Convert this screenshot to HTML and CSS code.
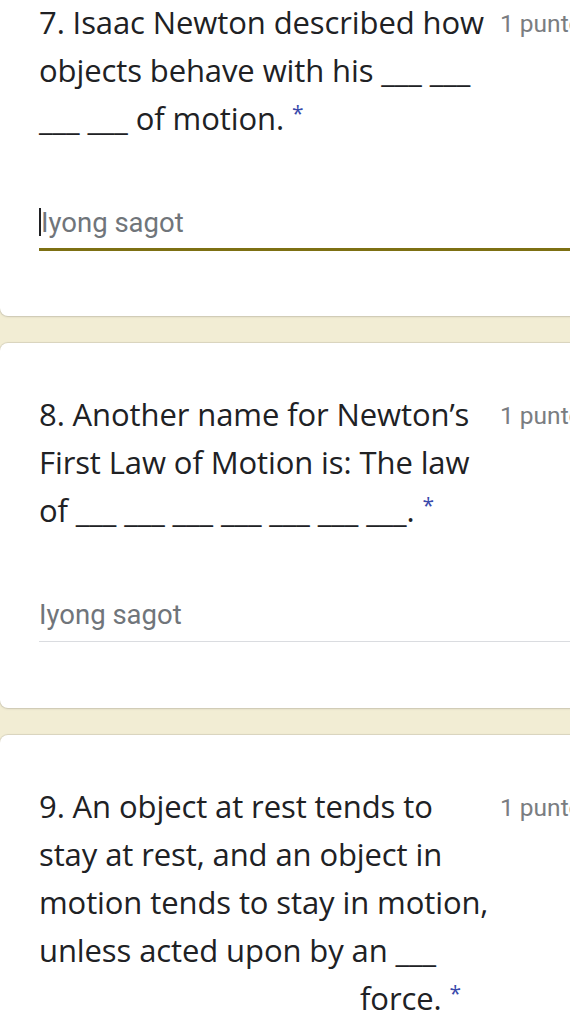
FILE: index.html
```html
<!DOCTYPE html>
<html lang="en">
<head>
    <meta charset="UTF-8">
    <meta name="viewport" content="width=device-width, initial-scale=1.0">
    <title>Quiz - Newton's Laws</title>
    <link rel="stylesheet" href="styles.css">
</head>
<body>
    <div class="form-page">
        <div class="question-card">
            <div class="question-head">
                <div class="question-title">7. Isaac Newton described how<br>objects behave with his ___ ___<br>___ ___ of motion. <span class="required">*</span></div>
                <div class="question-points">1 punto</div>
            </div>
            <div class="answer-field focused">
                <span class="caret"></span><span class="placeholder">Iyong sagot</span>
            </div>
        </div>

        <div class="question-card">
            <div class="question-head">
                <div class="question-title">8. Another name for Newton’s<br>First Law of Motion is: The law<br>of ___ ___ ___ ___ ___ ___ ___. <span class="required">*</span></div>
                <div class="question-points">1 punto</div>
            </div>
            <div class="answer-field">
                <span class="placeholder">Iyong sagot</span>
            </div>
        </div>

        <div class="question-card">
            <div class="question-head">
                <div class="question-title">9. An object at rest tends to<br>stay at rest, and an object in<br>motion tends to stay in motion,<br>unless acted upon by an ___<br><span class="tail">force. <span class="required">*</span></span></div>
                <div class="question-points">1 punto</div>
            </div>
        </div>
    </div>
</body>
</html>
```

FILE: styles.css
```css
body, html {
    margin: 0;
    padding: 0;
    background-color: #f2edd4;
    overflow: hidden;
    height: 100%;
}

.form-page {
    width: 640px;
    margin-top: -49px;
    display: flex;
    flex-direction: column;
    gap: 27px;
}

.question-card {
    background-color: #fff;
    border-radius: 8px;
    box-shadow: 0 0 1px 1px rgba(0, 0, 0, 0.1), 0 1px 3px rgba(0, 0, 0, 0.08);
    padding: 47px 0 0 39px;
    height: 365px;
    box-sizing: border-box;
}

.question-head {
    display: flex;
    align-items: flex-start;
}

.question-title {
    width: 461px;
    font-family: "Open Sans", sans-serif;
    font-size: 31px;
    line-height: 48px;
    color: #202124;
    letter-spacing: -0.1px;
    white-space: nowrap;
}

.required {
    color: #3949ab;
    font-size: 21px;
    line-height: 0;
    vertical-align: 9px;
}

.tail {
    padding-left: 321px;
}

.question-points {
    font-family: Roboto, sans-serif;
    font-size: 24.5px;
    color: #7a7d81;
    line-height: 52px;
    white-space: nowrap;
}

.answer-field {
    margin-top: 54px;
    width: 601px;
    height: 53px;
    border-bottom: 1px solid #dadce0;
    display: flex;
    align-items: center;
    font-family: Roboto, sans-serif;
    font-size: 27.5px;
    color: #70757a;
}

.answer-field.focused {
    border-bottom: 3px solid #7d7013;
    height: 52px;
}

.caret {
    display: inline-block;
    width: 2px;
    height: 28px;
    background-color: #202124;
}
```
